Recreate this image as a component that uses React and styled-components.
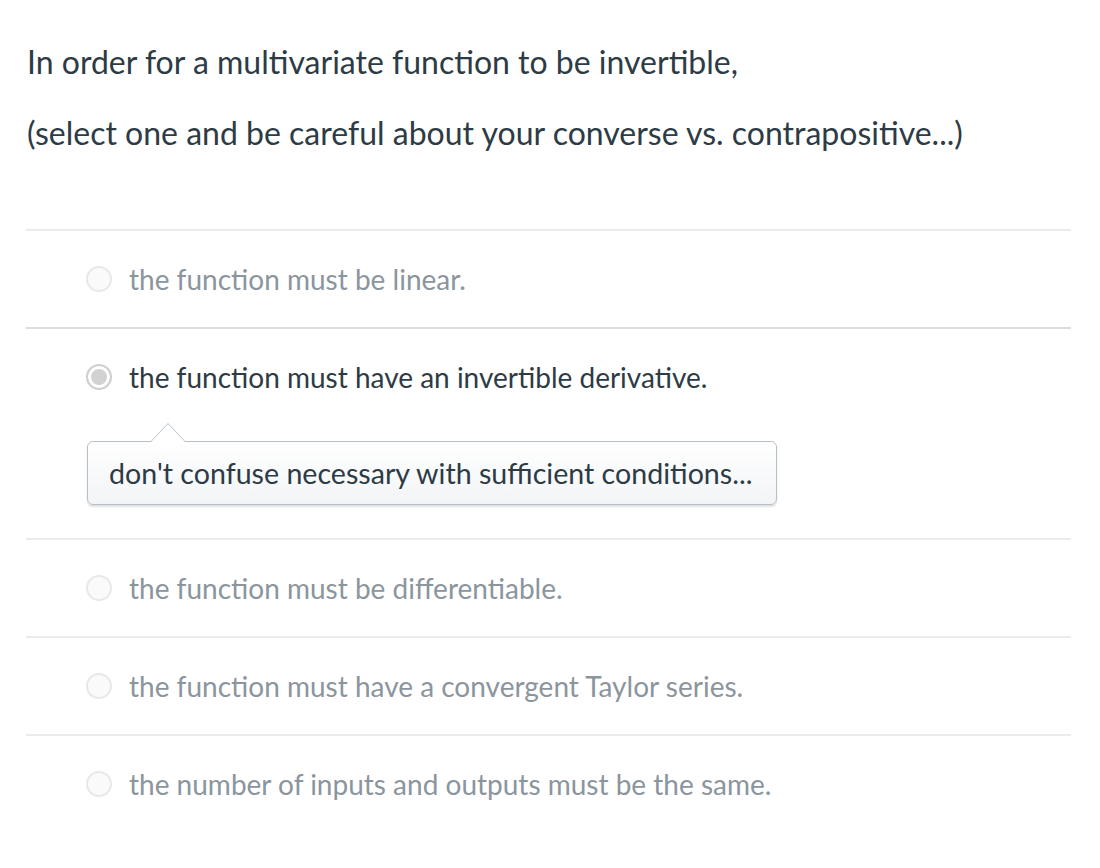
import React from "react";
import styled, { createGlobalStyle } from "styled-components";

const Global = createGlobalStyle`
  html, body { margin: 0; padding: 0; background: #fff; }
  body { font-family: Lato, "Open Sans", sans-serif; color: #2d3b45; }
`;

const Page = styled.div`
  width: 1100px;
  padding: 0 29px 0 26px;
  box-sizing: border-box;
`;

const Question = styled.div`
  padding: 44px 0 0 1px;
  font-size: 32px;
  line-height: 36px;
`;

const Para = styled.p`
  margin: 0;
  & + & {
    margin-top: 35px;
  }
`;

const Answers = styled.div`
  margin-top: 78px;
`;

const Answer = styled.div`
  border-top: 2px solid ${(p) => (p.dark ? "#dcdcdc" : "#ebebeb")};
  padding: 0 0 0 60px;
`;

const Row = styled.label`
  display: flex;
  align-items: center;
  gap: 17px;
  height: 96px;
  font-size: 28px;
  color: ${(p) => (p.selected ? "#2d3b45" : "#8b959d")};
`;

const Radio = styled.span`
  width: 26px;
  height: 26px;
  box-sizing: border-box;
  border-radius: 50%;
  border: 2px solid ${(p) => (p.selected ? "#cfcfcf" : "#e8e8e8")};
  background: ${(p) => (p.selected ? "#d2d2d2" : "#fafafa")};
  box-shadow: ${(p) => (p.selected ? "inset 0 0 0 3px #fff" : "none")};
  flex: none;
`;

const Comment = styled.div`
  position: relative;
  width: 690px;
  box-sizing: border-box;
  margin: 16px 0 33px 1px;
  padding: 14px 21px 14px;
  border: 1px solid #b7c0c8;
  border-radius: 6px;
  background: linear-gradient(#ffffff, #f2f4f6);
  box-shadow: 0 2px 2px rgba(0, 0, 0, 0.12);
  font-size: 28.6px;
  line-height: 34px;
  color: #2d3b45;

  &::before,
  &::after {
    content: "";
    position: absolute;
    left: 63px;
    width: 0;
    height: 0;
    border-left: 17px solid transparent;
    border-right: 17px solid transparent;
  }
  &::before {
    top: -19px;
    border-bottom: 18px solid #b7c0c8;
  }
  &::after {
    top: -18px;
    border-bottom: 18px solid #fff;
  }
`;

const answers = [
  { text: "the function must be linear." },
  {
    text: "the function must have an invertible derivative.",
    selected: true,
    dark: true,
    comment: "don't confuse necessary with sufficient conditions...",
  },
  { text: "the function must be differentiable." },
  { text: "the function must have a convergent Taylor series." },
  { text: "the number of inputs and outputs must be the same." },
];

export default function App() {
  return (
    <Page>
      <Global />
      <Question>
        <Para>In order for a multivariate function to be invertible,</Para>
        <Para>(select one and be careful about your converse vs. contrapositive...)</Para>
      </Question>
      <Answers>
        {answers.map((a, i) => (
          <Answer key={i} dark={a.dark}>
            <Row selected={a.selected}>
              <Radio selected={a.selected} />
              {a.text}
            </Row>
            {a.comment && <Comment>{a.comment}</Comment>}
          </Answer>
        ))}
      </Answers>
    </Page>
  );
}
